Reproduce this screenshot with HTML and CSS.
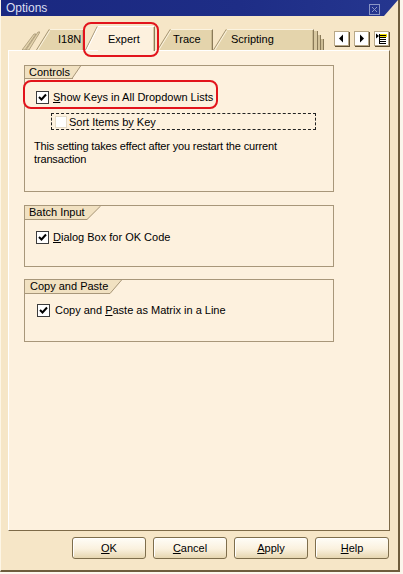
FILE: index.html
```html
<!DOCTYPE html>
<html>
<head>
<meta charset="utf-8">
<link rel="stylesheet" href="styles.css">
</head>
<body>
<div class="window">
  <div class="titlebar">
    <span class="title">Options</span>
    <span class="close"><svg width="11" height="11" viewBox="0 0 11 11"><rect x="0.5" y="0.5" width="10" height="10" fill="none" stroke="#8a95c6"/><path d="M3 3 L8 8 M8 3 L3 8" stroke="#8a95c6" stroke-width="1"/></svg></span>
  </div>

  <div class="tabrow">
    <svg class="stack-left" width="18" height="21" viewBox="0 0 18 21">
      <polygon points="0,21 12,5 14,5 3,21" fill="#e4d4ac" stroke="#a49474" stroke-width="0.8"/>
      <polygon points="4,21 16,3 18,3 7,21" fill="#e4d4ac" stroke="#a49474" stroke-width="0.8"/>
    </svg>
    <div class="tab t-i18n">
      <svg class="slant" width="14" height="21" viewBox="0 0 14 21"><polygon points="0,21 13,0 14,0 14,21" fill="#e4d4ac"/><line x1="0.5" y1="21" x2="13.2" y2="0.5" stroke="#a89878"/><line x1="1.8" y1="21" x2="13.8" y2="1.6" stroke="#fbf3e0"/></svg>
      <div class="tbody">I18N</div>
    </div>
    <div class="tab active t-expert">
      <svg class="slant" width="13" height="24" viewBox="0 0 13 24"><polygon points="0,24 12,0 13,0 13,24" fill="#fdf1de"/><line x1="0.5" y1="24" x2="12.2" y2="0.5" stroke="#a89878"/><line x1="1.8" y1="24" x2="12.8" y2="1.8" stroke="#ffffff"/></svg>
      <div class="tbody">Expert</div>
    </div>
    <div class="tab t-trace">
      <svg class="slant" width="14" height="21" viewBox="0 0 14 21"><polygon points="0,21 13,0 14,0 14,21" fill="#e4d4ac"/><line x1="0.5" y1="21" x2="13.2" y2="0.5" stroke="#a89878"/><line x1="1.8" y1="21" x2="13.8" y2="1.6" stroke="#fbf3e0"/></svg>
      <div class="tbody">Trace</div>
    </div>
    <div class="tab t-script">
      <svg class="slant" width="14" height="21" viewBox="0 0 14 21"><polygon points="0,21 13,0 14,0 14,21" fill="#e4d4ac"/><line x1="0.5" y1="21" x2="13.2" y2="0.5" stroke="#a89878"/><line x1="1.8" y1="21" x2="13.8" y2="1.6" stroke="#fbf3e0"/></svg>
      <div class="tbody">Scripting</div>
    </div>
    <svg class="stack-right" width="11" height="21" viewBox="0 0 11 21">
      <rect x="0" y="2" width="4" height="19" fill="#d8c8a0"/>
      <line x1="3.5" y1="2" x2="3.5" y2="21" stroke="#8a7a58"/>
      <rect x="4" y="6" width="3" height="15" fill="#d2c29a"/>
      <line x1="6.5" y1="6" x2="6.5" y2="21" stroke="#8a7a58"/>
      <rect x="7" y="10" width="3" height="11" fill="#ccbc94"/>
      <line x1="9.5" y1="10" x2="9.5" y2="21" stroke="#8a7a58"/>
    </svg>
    <div class="navbtns">
      <span class="nbtn"><svg width="13" height="13" viewBox="0 0 13 13"><polygon points="4,6.5 8,2.5 8,10.5" fill="#000"/></svg></span>
      <span class="nbtn"><svg width="13" height="13" viewBox="0 0 13 13"><polygon points="9,6.5 5,2.5 5,10.5" fill="#000"/></svg></span>
      <span class="nbtn"><svg width="13" height="13" viewBox="0 0 13 13"><rect x="5" y="2" width="7" height="3" fill="#f5e000"/><polygon points="1,1.5 4,4 1,6.5" fill="#000"/><rect x="1" y="3.5" width="2" height="1" fill="#000"/><path d="M5 3.5H11 M5 5.5H11 M5 7.5H11 M5 9.5H11 M5 11.5H11" stroke="#000" stroke-width="1"/><line x1="4.5" y1="2" x2="4.5" y2="12" stroke="#000"/></svg></span>
    </div>
  </div>

  <div class="panel">
    <div class="group g-controls">
      <div class="ghead"><span class="glabel">Controls</span><svg class="gslant" width="9" height="13" viewBox="0 0 9 13"><polygon points="0,0 0.5,0 9,0 0,13" fill="#f1e1c1"/><line x1="8.6" y1="0" x2="0" y2="12.5" stroke="#a8977a"/><line x1="0" y1="12.5" x2="1" y2="12.5" stroke="#a8977a"/></svg></div>
      <div class="cbrow r-show"><span class="cb checked"><svg width="11" height="11" viewBox="0 0 11 11"><path d="M2 5 L4.5 7.5 L9 2.5" fill="none" stroke="#000" stroke-width="2"/></svg></span><span><u>S</u>how Keys in All Dropdown Lists</span></div>
      <div class="focusrow"><span class="cb plain"></span><span>Sort Items by Key</span></div>
      <p class="note">This setting takes effect after you restart the current<br>transaction</p>
    </div>

    <div class="group g-batch">
      <div class="ghead"><span class="glabel">Batch Input</span><svg class="gslant" width="14" height="14" viewBox="0 0 14 14"><polygon points="0,0 14,0 0,14" fill="#f1e1c1"/><line x1="13.6" y1="0" x2="0" y2="13.5" stroke="#a8977a"/></svg></div>
      <div class="cbrow r-dialog"><span class="cb checked"><svg width="11" height="11" viewBox="0 0 11 11"><path d="M2 5 L4.5 7.5 L9 2.5" fill="none" stroke="#000" stroke-width="2"/></svg></span><span><u>D</u>ialog Box for OK Code</span></div>
    </div>

    <div class="group g-copy">
      <div class="ghead"><span class="glabel">Copy and Paste</span><svg class="gslant" width="12" height="14" viewBox="0 0 12 14"><polygon points="0,0 12,0 0,14" fill="#f1e1c1"/><line x1="11.6" y1="0" x2="0" y2="13.5" stroke="#a8977a"/></svg></div>
      <div class="cbrow r-copy"><span class="cb checked"><svg width="11" height="11" viewBox="0 0 11 11"><path d="M2 5 L4.5 7.5 L9 2.5" fill="none" stroke="#000" stroke-width="2"/></svg></span><span>Copy and <u>P</u>aste as Matrix in a Line</span></div>
    </div>
  </div>

  <div class="buttons">
    <span class="btn"><u>O</u>K</span>
    <span class="btn"><u>C</u>ancel</span>
    <span class="btn"><u>A</u>pply</span>
    <span class="btn"><u>H</u>elp</span>
  </div>

  <div class="annot annot-tab"></div>
  <div class="annot annot-show"></div>
</div>
</body>
</html>
```

FILE: styles.css
```css
* { box-sizing: border-box; }
html, body { margin: 0; padding: 0; }
body {
  width: 403px;
  height: 574px;
  background: #fbf6ec;
  font-family: "Liberation Sans", Arial, sans-serif;
  font-size: 11px;
  color: #000;
  overflow: hidden;
}
u { text-decoration: underline; text-underline-offset: 1px; }

.window {
  position: relative;
  width: 400px;
  height: 572px;
  background: #f6e6c7;
  border-left: 1px solid #fdf6e6;
  border-right: 2px solid #6e5c3c;
  border-bottom: 2px solid #6e5c3c;
  display: flex;
  flex-direction: column;
}

.titlebar {
  height: 16px;
  flex: none;
  background: linear-gradient(90deg, #1a2880 0%, #1e2d86 60%, #25368f 100%);
  clip-path: polygon(0 0, 100% 0, calc(100% - 14px) 100%, 0 100%);
  display: flex;
  align-items: center;
  padding-left: 5px;
  padding-right: 18px;
}
.title {
  color: #dcdff0;
  font-size: 12px;
  flex: 1;
}
.close { display: flex; margin-top: 2px; }

.tabrow {
  height: 34px;
  flex: none;
  display: flex;
  align-items: flex-end;
  padding-left: 21px;
  position: relative;
  z-index: 2;
}
.stack-left { display: block; flex: none; }
.tab {
  display: flex;
  flex: none;
  height: 21px;
}
.slant { display: block; flex: none; }
.tbody {
  flex: 1;
  background: #e4d4ac;
  border-top: 1px solid #fbf3e0;
  border-right: 1px solid #8a7a58;
  box-shadow: inset -1px 0 0 #c8b890;
  line-height: 19px;
  white-space: nowrap;
}
.t-i18n { margin-left: -4px; width: 48px; }
.t-i18n .tbody { padding-left: 8px; }
.t-expert { margin-left: 1px; width: 70px; height: 25px; margin-bottom: -1px; }
.t-expert .tbody { background: #fdf1de; border-top-color: #fff; padding-left: 10px; line-height: 25px; box-shadow: inset -1px 0 0 #d8c8a4; }
.t-trace { margin-left: 2px; width: 56px; }
.t-trace .tbody { padding-left: 2px; }
.t-script { margin-left: 0px; width: 101px; }
.t-script .tbody { padding-left: 4px; }
.stack-right { display: block; flex: none; }

.navbtns {
  display: flex;
  gap: 5px;
  margin-left: 9px;
  margin-bottom: 4px;
}
.nbtn {
  width: 15px;
  height: 15px;
  background: #fff;
  border: 1px solid #b8a888;
  box-shadow: 1px 1px 0 #5e4e32;
  display: flex;
}

.panel {
  flex: none;
  height: 481px;
  margin: 0 8px 0 7px;
  background: #fdf1de;
  border-top: 1px solid #ffffff;
  border-left: 1px solid #ffffff;
  border-right: 1px solid #7d6a48;
  border-bottom: 1px solid #7d6a48;
  padding: 14px 0 0 15px;
  display: flex;
  flex-direction: column;
}

.group {
  width: 310px;
  border: 1px solid #a8977a;
  flex: none;
}
.g-controls { height: 127px; }
.g-batch { height: 62px; margin-top: 13px; }
.g-copy { height: 63px; margin-top: 12px; }

.ghead { display: flex; align-items: flex-start; }
.glabel {
  background: #f1e1c1;
  border-bottom: 1px solid #a8977a;
  padding: 0 2px 0 4px;
  height: 13px;
  line-height: 12px;
  white-space: nowrap;
}
.g-batch .glabel, .g-copy .glabel { height: 14px; line-height: 13px; }
.g-copy .glabel { padding-left: 5px; }
.gslant { display: block; }

.cbrow {
  display: flex;
  align-items: center;
  gap: 4px;
  height: 13px;
  line-height: 13px;
  white-space: nowrap;
}
.r-show { margin-top: 12px; margin-left: 11px; }
.r-dialog { margin-top: 11px; margin-left: 11px; }
.r-copy { margin-top: 10px; margin-left: 12px; gap: 5px; }

.cb {
  width: 13px;
  height: 13px;
  background: #fff;
  border: 1px solid #3c3c3c;
  display: flex;
  flex: none;
}
.cb.plain { border-color: #e6dcc8; width: 12px; height: 12px; }

.focusrow {
  margin-top: 9px;
  margin-left: 26px;
  width: 265px;
  height: 17px;
  border: 1px dashed #222;
  display: flex;
  align-items: center;
  gap: 2px;
  padding-left: 3px;
  white-space: nowrap;
}

.note {
  margin: 10px 0 0 9px;
  line-height: 13px;
  letter-spacing: -0.15px;
}

.buttons {
  flex: none;
  margin-top: 6px;
  display: flex;
  justify-content: flex-end;
  gap: 7px;
  padding-right: 9px;
}
.btn {
  width: 74px;
  height: 22px;
  border: 1px solid #7e6e4c;
  border-radius: 3px;
  background: linear-gradient(#fffdf7 0%, #faf1de 55%, #e6d6b0 100%);
  box-shadow: inset 1px 1px 0 #fff;
  display: flex;
  align-items: center;
  justify-content: center;
}

.annot {
  position: absolute;
  border: 2px solid #e2141c;
  border-radius: 8px;
  z-index: 5;
}
.annot-tab { left: 82px; top: 22px; width: 76px; height: 35px; }
.annot-show { left: 22px; top: 80px; width: 195px; height: 29px; }
```
